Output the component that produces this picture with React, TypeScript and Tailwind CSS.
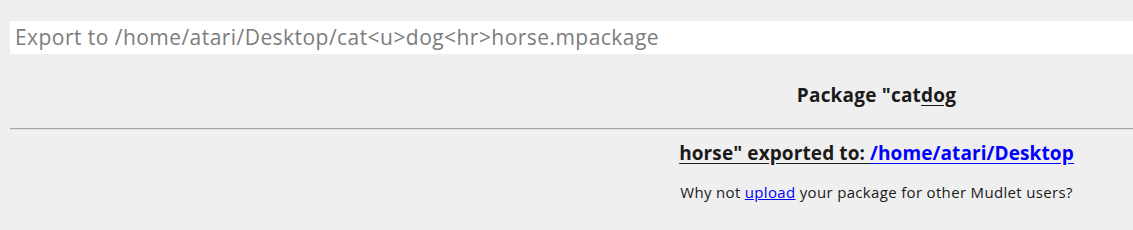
import React from "react";

export default function App() {
  const font = { fontFamily: '"Open Sans", "Noto Sans", sans-serif' };
  return (
    <div className="h-[230px] w-[1133px] bg-[#efefef] overflow-hidden" style={font}>
      <div className="pt-[21px] pl-[10px]">
        <div className="h-[33px] bg-white flex items-center pl-[5px] text-[21px] text-[#7c7c7c] tracking-[0.45px] whitespace-nowrap">
          Export to /home/atari/Desktop/cat&lt;u&gt;dog&lt;hr&gt;horse.mpackage
        </div>
      </div>
      <div className="pl-[10px]">
        <div className="flex justify-end pt-[29px]">
          <div className="w-[513px] text-center text-[19px] font-bold text-[#1a1a1a] leading-[24px] tracking-[0.2px]">
            Package "cat<span className="underline underline-offset-[3px]">dog</span>
          </div>
        </div>
        <div className="mt-[21px] h-[2px] border-t border-[#a2a2a2] bg-[#e4e4e4]" />
        <div className="flex justify-end pt-[11px]">
          <div className="w-[513px] text-center leading-[24px]">
            <span className="text-[19px] font-bold text-[#1a1a1a] underline underline-offset-[3px] tracking-[0.1px]">
              horse" exported to:{" "}
              <a className="text-[#0000ff] underline">/home/atari/Desktop</a>
            </span>
            <div className="mt-[17px] text-[15px] text-[#1a1a1a] leading-[18px] tracking-[0.33px]">
              Why not <a className="text-[#0000ff] underline">upload</a> your package for other Mudlet users?
            </div>
          </div>
        </div>
      </div>
    </div>
  );
}
